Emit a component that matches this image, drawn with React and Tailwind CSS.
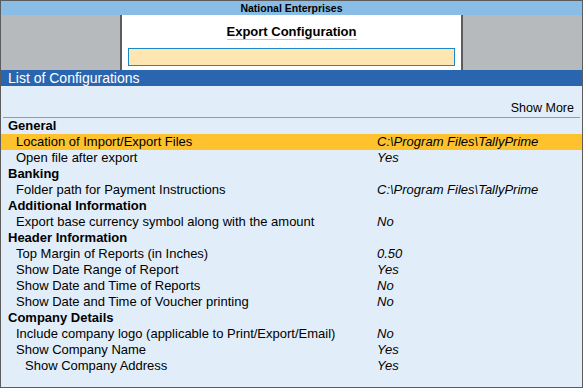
const FONT = { fontFamily: '"Liberation Sans", Arial, sans-serif' };

const sections = [
  {
    title: 'General',
    rows: [
      { label: 'Location of Import/Export Files', value: 'C:\\Program Files\\TallyPrime', active: true },
      { label: 'Open file after export', value: 'Yes' },
    ],
  },
  {
    title: 'Banking',
    rows: [{ label: 'Folder path for Payment Instructions', value: 'C:\\Program Files\\TallyPrime' }],
  },
  {
    title: 'Additional Information',
    rows: [{ label: 'Export base currency symbol along with the amount', value: 'No' }],
  },
  {
    title: 'Header Information',
    rows: [
      { label: 'Top Margin of Reports (in Inches)', value: '0.50' },
      { label: 'Show Date Range of Report', value: 'Yes' },
      { label: 'Show Date and Time of Reports', value: 'No' },
      { label: 'Show Date and Time of Voucher printing', value: 'No' },
    ],
  },
  {
    title: 'Company Details',
    rows: [
      { label: 'Include company logo (applicable to Print/Export/Email)', value: 'No' },
      { label: 'Show Company Name', value: 'Yes' },
      { label: 'Show Company Address', value: 'Yes', deep: true },
    ],
  },
];

function Row({ row }) {
  return (
    <div className={`flex h-4 items-center text-[13px] text-black ${row.active ? 'bg-[#fec22f]' : ''}`}>
      <span className={`${row.deep ? 'pl-[24px]' : 'pl-[15px]'} w-[376px] shrink-0 whitespace-nowrap`}>{row.label}</span>
      <span className="italic whitespace-nowrap">{row.value}</span>
    </div>
  );
}

export default function App() {
  return (
    <div style={FONT} className="w-[583px] h-[388px] border border-[#5c5c5c] flex flex-col bg-[#e1eef9] overflow-hidden">
      <div className="h-[14px] bg-[#89bde6] flex items-center justify-center text-[10.5px] font-bold text-black leading-none">
        National Enterprises
      </div>
      <div className="h-[55px] flex">
        <div className="w-[121px] bg-[#b7babd] border-r-2 border-[#5c5c5c]" />
        <div className="w-[339px] bg-white flex flex-col items-center">
          <div className="mt-[9px] text-[13px] font-bold text-black border-b border-[#c4c4c4] leading-[15px]">
            Export Configuration
          </div>
          <div className="mt-[8px] w-[327px] h-[18px] bg-[#fee6b2] border border-[#1a88c9]" />
        </div>
        <div className="flex-1 bg-[#b7babd] border-l-2 border-[#5c5c5c]" />
      </div>
      <div className="h-[16px] bg-[#2a66b0] text-white text-[14px] flex items-center pl-[7px] leading-none">
        List of Configurations
      </div>
      <div className="flex-1 flex flex-col">
        <div className="h-[32px] flex items-end justify-end pr-[6px] pb-[3px] text-[12.5px] leading-none text-black border-b border-[#9a9a9a] mx-[2px]">
          Show More
        </div>
        <div className="flex flex-col">
          {sections.map((s) => (
            <div key={s.title}>
              <div className="h-4 flex items-center pl-[7px] text-[13px] font-bold text-black">{s.title}</div>
              {s.rows.map((r) => (
                <Row key={r.label} row={r} />
              ))}
            </div>
          ))}
        </div>
      </div>
    </div>
  );
}
